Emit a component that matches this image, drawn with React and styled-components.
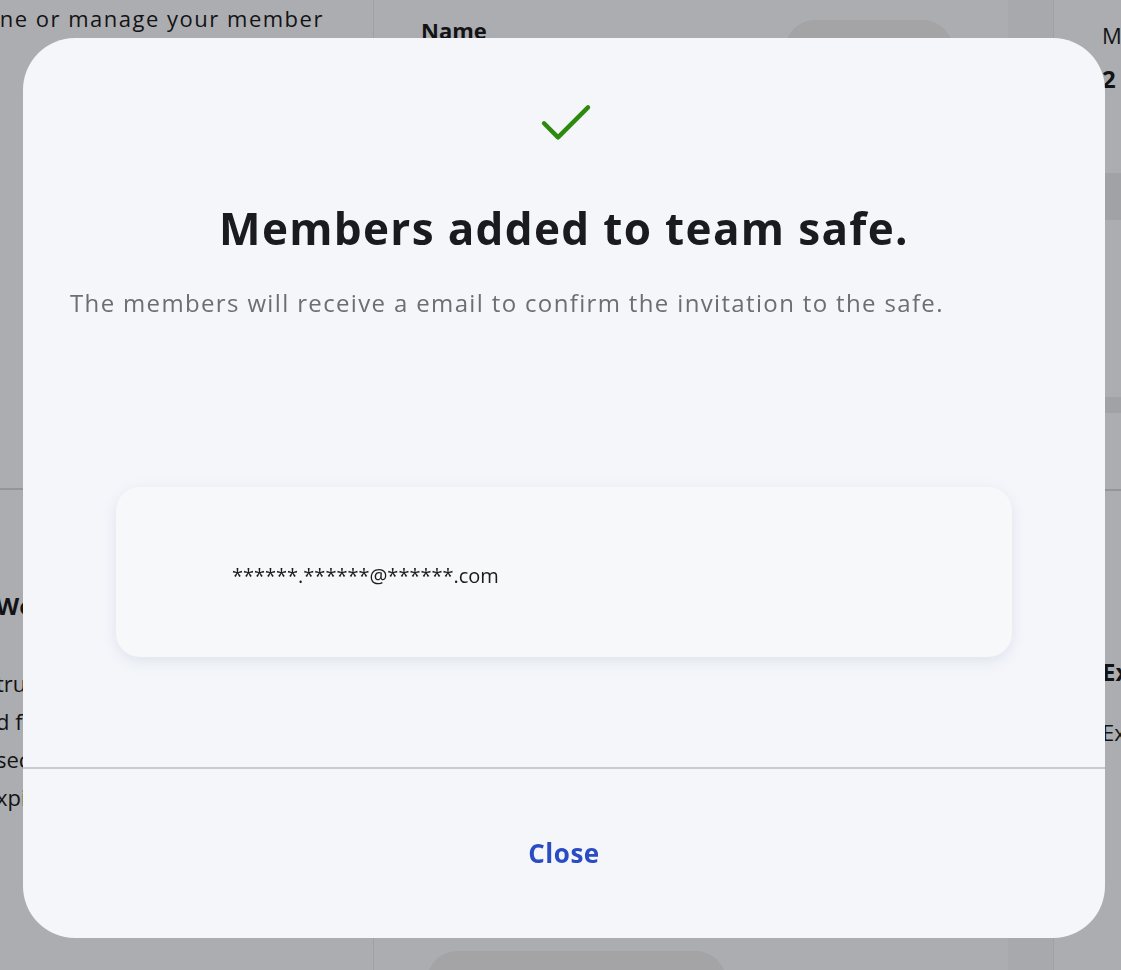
import React from "react";
import styled, { createGlobalStyle } from "styled-components";

const GlobalStyle = createGlobalStyle`
  html, body { margin: 0; padding: 0; }
  body {
    font-family: "Open Sans", "Noto Sans", "Liberation Sans", sans-serif;
    background: #f4f6fa;
    color: #1c1c1e;
  }
  * { box-sizing: border-box; }
`;

/* ---------- background page ---------- */
const Page = styled.div`
  display: grid;
  grid-template-columns: 374px 634px 46px 1fr;
  height: 970px;
  overflow: hidden;
  background: #f4f6fa;
`;

const Sidebar = styled.aside`
  border-right: 1px solid #e2e4ea;
  overflow: hidden;
  display: flex;
  flex-direction: column;
`;

const SideIntro = styled.p`
  margin: 4px 0 0 -15px;
  height: 486px;
  font-size: 22px;
  line-height: 28px;
  letter-spacing: 1.5px;
  white-space: nowrap;
  border-bottom: 2px solid #d2d4da;
`;

const SideSection = styled.div`
  padding: 102px 0 0 0;
  margin-left: -4px;
`;

const SideTitle = styled.h3`
  margin: 0 0 44px;
  font-size: 24px;
  font-weight: 700;
  line-height: 28px;
`;

const SideLine = styled.p`
  margin: 0;
  font-size: 22px;
  line-height: 38px;
  white-space: nowrap;
`;

const Main = styled.main`
  display: flex;
  flex-direction: column;
  justify-content: space-between;
  padding: 16px 55px 0 47px;
`;

const MainHead = styled.div`
  display: flex;
  align-items: flex-start;
  justify-content: space-between;
`;

const ColLabel = styled.span`
  font-size: 22px;
  font-weight: 700;
  line-height: 28px;
`;

const Pill = styled.div`
  width: ${(p) => p.$w}px;
  height: 64px;
  margin-top: 4px;
  border-radius: 30px;
  background: #e8e9ed;
`;

const MainFoot = styled.div`
  display: flex;
  padding-left: 6px;
  margin-bottom: -45px;
`;

const Strip = styled.div`
  background: #eef0f4;
  border-right: 1px solid #e2e4ea;
`;

const Aside = styled.aside`
  display: flex;
  flex-direction: column;
  padding-left: 48px;
  white-space: nowrap;
  overflow: hidden;
`;

const AsideLabel = styled.span`
  margin-top: 20px;
  font-size: 22px;
  line-height: 30px;
`;

const AsideValue = styled.span`
  margin-top: 14px;
  font-size: 24px;
  font-weight: 700;
  line-height: 30px;
`;

const Band = styled.div`
  margin: ${(p) => p.$top}px 0 0 -48px;
  height: ${(p) => p.$h}px;
  background: #e4e6ea;
`;

const AsideRule = styled.div`
  margin: 76px 0 0 -48px;
  border-top: 2px solid #d2d4da;
`;

const AsideTitle = styled.span`
  margin-top: 166px;
  font-size: 24px;
  font-weight: 700;
  line-height: 30px;
`;

const AsideText = styled.span`
  margin-top: 30px;
  font-size: 22px;
  line-height: 30px;
`;

/* ---------- modal ---------- */
const Overlay = styled.div`
  position: fixed;
  inset: 0;
  background: rgba(0, 0, 0, 0.295);
  display: flex;
  align-items: flex-start;
  justify-content: center;
  padding-top: 38px;
`;

const Modal = styled.div`
  width: 1082px;
  height: 900px;
  margin-left: 7px;
  border-radius: 52px;
  background: #f4f6fa;
  display: flex;
  flex-direction: column;
  overflow: hidden;
`;

const Body = styled.div`
  flex: 1;
  display: flex;
  flex-direction: column;
  padding: 64px 47px 0;
`;

const CheckWrap = styled.div`
  display: flex;
  justify-content: center;
  margin-left: 4px;
`;

const Title = styled.h1`
  margin: 60px 0 0;
  text-align: center;
  font-size: 44px;
  line-height: 52px;
  font-weight: 700;
  color: #1b1b1f;
  letter-spacing: 1.35px;
`;

const Subtitle = styled.p`
  margin: 34px 0 0;
  font-size: 24px;
  line-height: 30px;
  color: #6d6d72;
  letter-spacing: 1.35px;
`;

const EmailCard = styled.div`
  margin: 169px 46px 0;
  height: 170px;
  border-radius: 24px;
  background: #f7f8fa;
  box-shadow: 0 4px 14px rgba(120, 135, 165, 0.16);
  display: flex;
  align-items: center;
  padding-left: 116px;
`;

const Email = styled.span`
  font-size: 20px;
  line-height: 30px;
  color: #1b1b1f;
  margin-top: 8px;
`;

const Footer = styled.div`
  height: 171px;
  border-top: 2px solid #c9cacf;
  display: flex;
  align-items: center;
  justify-content: center;
`;

const CloseButton = styled.button`
  border: none;
  background: none;
  padding: 0;
  font-family: inherit;
  font-size: 26px;
  font-weight: 700;
  letter-spacing: 0.5px;
  color: #2a4cc2;
  cursor: pointer;
  margin-top: -2px;
`;

function CheckIcon() {
  return (
    <svg width="52" height="40" viewBox="0 0 52 40" fill="none">
      <path
        d="M4 21.3 L18 35.4 L48 5.4"
        stroke="#2e8a0c"
        strokeWidth="4.4"
        strokeLinecap="round"
        strokeLinejoin="round"
      />
    </svg>
  );
}

export default function App() {
  return (
    <>
      <GlobalStyle />
      <Page>
        <Sidebar>
          <SideIntro>one or manage your member</SideIntro>
          <SideSection>
            <SideTitle>Workspace</SideTitle>
            <SideLine>trusted contacts can access</SideLine>
            <SideLine>d files stored in this safe</SideLine>
            <SideLine>security settings may apply</SideLine>
            <SideLine>xpiration of the invitation</SideLine>
          </SideSection>
        </Sidebar>
        <Main>
          <MainHead>
            <ColLabel>Name</ColLabel>
            <Pill $w={168} />
          </MainHead>
          <MainFoot>
            <Pill $w={299} />
          </MainFoot>
        </Main>
        <Strip />
        <Aside>
          <AsideLabel>Members</AsideLabel>
          <AsideValue>2</AsideValue>
          <Band $top={79} $h={47} />
          <Band $top={177} $h={16} />
          <AsideRule />
          <AsideTitle>Expiration</AsideTitle>
          <AsideText>Expires in 7 days</AsideText>
        </Aside>
      </Page>
      <Overlay>
        <Modal role="dialog" aria-modal="true">
          <Body>
            <CheckWrap>
              <CheckIcon />
            </CheckWrap>
            <Title>Members added to team safe.</Title>
            <Subtitle>
              The members will receive a email to confirm the invitation to the safe.
            </Subtitle>
            <EmailCard>
              <Email>******.******@******.com</Email>
            </EmailCard>
          </Body>
          <Footer>
            <CloseButton>Close</CloseButton>
          </Footer>
        </Modal>
      </Overlay>
    </>
  );
}
